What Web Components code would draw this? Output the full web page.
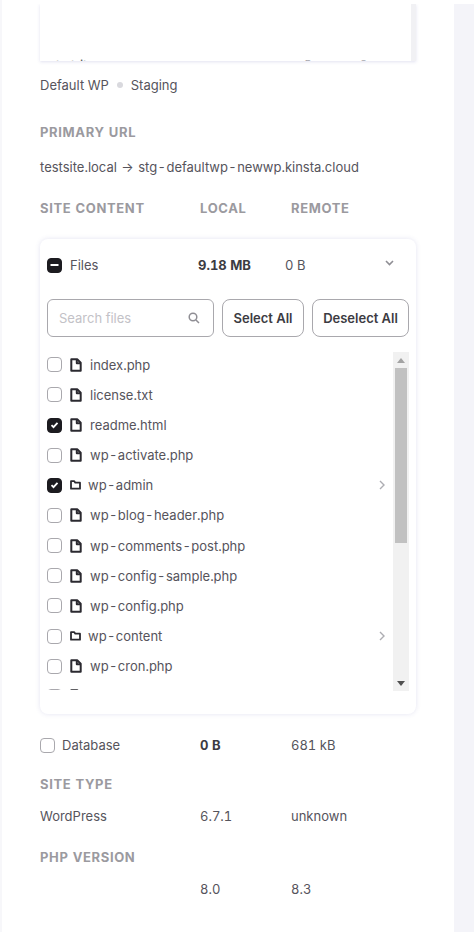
<!DOCTYPE html>
<html lang="en">
<head>
<meta charset="utf-8">
<title>Push to staging</title>
<style>
  html, body { margin: 0; padding: 0; background: #fff; }
  body { font-family: Inter, "Liberation Sans", sans-serif; font-size: 13px; font-variant-numeric: tabular-nums; color: #56545c; }
</style>
</head>
<body>
<push-panel>
  <preview-card></preview-card>
  <env-line></env-line>
  <section-label style="margin-top:28px">Primary URL</section-label>
  <url-line></url-line>
  <column-row heading style="margin-top:22px">
    <span>Site content</span><span>Local</span><span>Remote</span>
  </column-row>
  <files-card></files-card>
  <column-row checkbox style="margin-top:21px">
    <span>Database</span><b>0 B</b><span>681 kB</span>
  </column-row>
  <section-label style="margin-top:20px">Site type</section-label>
  <column-row style="margin-top:13px">
    <span>WordPress</span><span>6.7.1</span><span>unknown</span>
  </column-row>
  <section-label style="margin-top:22px">PHP version</section-label>
  <column-row style="margin-top:13px">
    <span></span><span>8.0</span><span>8.3</span>
  </column-row>
</push-panel>

<script>
const FILE_ICON = `<svg width="12" height="14" viewBox="0 0 12 14" fill="none" stroke="#2b2a30" stroke-width="2" stroke-linejoin="round"><path d="M1.3 1.2h5.9l3.5 3.5v8.1H1.3z"/><path d="M6.8 1.2v4h3.9"/></svg>`;
const FOLDER_ICON = `<svg width="11" height="10" viewBox="0 0 11 10" fill="none" stroke="#2b2a30" stroke-width="1.8" stroke-linejoin="round"><path d="M1 1.2h3.3l1 1.5H10v6H1z"/></svg>`;

// the hyphens in the reference sit a little wider than the font's own
const spaced = s => s.replace(/-/g, '<span style="margin:0 .4px">-</span>');

class PushPanel extends HTMLElement {
  constructor() {
    super();
    this.attachShadow({mode: 'open'});
    this.shadowRoot.innerHTML = `
      <style>
        :host { display: flex; width: 474px; height: 932px; overflow: hidden; box-sizing: border-box; }
        .edge { width: 2px; background: #f7f7fa; flex: none; }
        .main { width: 452px; flex: none; padding: 0 38px; box-sizing: border-box; background: #fff; }
        .side { flex: 1; margin-top: 4px; background: #f4f4f9; }
      </style>
      <div class="edge"></div>
      <div class="main"><slot></slot></div>
      <div class="side"></div>
    `;
  }
}

class PreviewCard extends HTMLElement {
  constructor() {
    super();
    this.attachShadow({mode: 'open'});
    this.shadowRoot.innerHTML = `
      <style>
        :host { display: block; height: 57px; margin-top: 4px; width: 376px; background: #fff;
          box-shadow: 0 1px 3px rgba(90, 90, 170, .18); clip-path: inset(0 -4px -4px -4px); position: relative; }
        .peek { position: absolute; left: 0; right: 0; bottom: 0; height: 2px; overflow: hidden;
          display: flex; font-size: 10px; line-height: 10px; color: #a5a5ab; }
        .peek b { margin-left: 16px; width: 259px; color: #555; }
        .peek span { width: 58px; }
        .bar { position: absolute; right: 0; top: 0; bottom: 0; width: 5px; background: #f1f1f4; }
      </style>
      <div class="peek"><b>testsite</b><span>Dev</span><span>Sync</span></div>
      <div class="bar"></div>
    `;
  }
}

class EnvLine extends HTMLElement {
  constructor() {
    super();
    this.attachShadow({mode: 'open'});
    this.shadowRoot.innerHTML = `
      <style>
        :host { display: flex; align-items: center; gap: 8px; margin-top: 14px; line-height: 20px; }
        i { width: 6px; height: 6px; border-radius: 50%; background: #d9d9de; }
      </style>
      <span>Default WP</span><i></i><span>Staging</span>
    `;
  }
}

class SectionLabel extends HTMLElement {
  constructor() {
    super();
    this.attachShadow({mode: 'open'});
    this.shadowRoot.innerHTML = `
      <style>
        :host { display: block; font-size: 13px; font-weight: 700; line-height: 18px; letter-spacing: .65px;
          text-transform: uppercase; color: #9b9a9f; }
      </style>
      <slot></slot>
    `;
  }
}

class UrlLine extends HTMLElement {
  constructor() {
    super();
    this.attachShadow({mode: 'open'});
    this.shadowRoot.innerHTML = `
      <style>
        :host { display: block; margin-top: 16px; line-height: 20px; white-space: nowrap; }
        .arrow { margin: 0 1px; }
      </style>
      testsite.local <span class="arrow">→</span> ${spaced('stg-defaultwp-newwp.kinsta.cloud')}
    `;
  }
}

class CheckMark extends HTMLElement {
  constructor() {
    super();
    this.attachShadow({mode: 'open'});
    const state = this.getAttribute('state');
    const inner = state === 'checked'
      ? `<svg width="9" height="8" viewBox="0 0 9 8" fill="none" stroke="#fff" stroke-width="1.8"><path d="M1.5 4.2l2 2 4-4.4"/></svg>`
      : state === 'mixed'
        ? `<svg width="9" height="8" viewBox="0 0 9 8" fill="none" stroke="#fff" stroke-width="2"><path d="M.5 4h8"/></svg>`
        : '';
    this.shadowRoot.innerHTML = `
      <style>
        :host { display: flex; align-items: center; justify-content: center; flex: none; box-sizing: border-box;
          width: 15px; height: 15px; border-radius: 4px; border: 1px solid #a9a8ad; background: #fff; }
        :host([state]) { background: #1c1b20; border-color: #1c1b20; }
      </style>
      ${inner}
    `;
  }
}

class ColumnRow extends HTMLElement {
  constructor() {
    super();
    this.attachShadow({mode: 'open'});
    this.shadowRoot.innerHTML = `
      <style>
        :host { display: grid; grid-template-columns: 160px 91px 1fr; align-items: center; line-height: 20px; }
        :host([heading]) { font-size: 13px; font-weight: 700; letter-spacing: .65px; text-transform: uppercase; color: #9b9a9f; line-height: 18px; }
        ::slotted(b) { font-weight: 700; color: #3c3b42; }
      </style>
      <slot></slot>
    `;
    if (this.hasAttribute('checkbox')) {
      const first = this.firstElementChild;
      first.style.cssText = 'display:flex;align-items:center;gap:7px';
      first.insertAdjacentHTML('afterbegin', '<check-mark></check-mark>');
    }
  }
}

class FileRow extends HTMLElement {
  constructor() {
    super();
    this.attachShadow({mode: 'open'});
    const folder = this.hasAttribute('folder');
    const checked = this.hasAttribute('checked');
    this.shadowRoot.innerHTML = `
      <style>
        :host { display: flex; align-items: center; height: 30.15px; flex: none; white-space: nowrap; }
        check-mark { margin-right: 8px; }
        svg { flex: none; }
        .icon { display: flex; width: 12px; }
        .name { margin-left: ${folder ? 6 : 8}px; flex: 1; }
        .more { margin-right: 8px; display: flex; }
      </style>
      <check-mark ${checked ? 'state="checked"' : ''}></check-mark>
      <span class="icon">${folder ? FOLDER_ICON : FILE_ICON}</span>
      <span class="name"><slot></slot></span>
      ${folder ? `<span class="more"><svg width="6" height="10" viewBox="0 0 6 10" fill="none" stroke="#adadb2" stroke-width="1.4"><path d="M1 1l4 4-4 4"/></svg></span>` : ''}
    `;
  }
}

class ScrollTrack extends HTMLElement {
  constructor() {
    super();
    this.attachShadow({mode: 'open'});
    this.shadowRoot.innerHTML = `
      <style>
        :host { display: flex; flex-direction: column; align-items: center; flex: none; width: 16px; background: #f1f1f1; }
        .cap { height: 16px; width: 100%; display: flex; align-items: center; justify-content: center; flex: none; }
        .thumb { width: 12px; height: 175px; background: #c1c1c1; flex: none; }
        .rest { flex: 1; }
      </style>
      <div class="cap"><svg width="8" height="5" viewBox="0 0 8 5"><path d="M4 0l4 5H0z" fill="#a3a3a3"/></svg></div>
      <div class="thumb"></div>
      <div class="rest"></div>
      <div class="cap"><svg width="8" height="5" viewBox="0 0 8 5"><path d="M0 0h8L4 5z" fill="#505050"/></svg></div>
    `;
  }
}

class FilesCard extends HTMLElement {
  constructor() {
    super();
    this.attachShadow({mode: 'open'});
    const files = [
      ['index.php'], ['license.txt'], ['readme.html', 'checked'], ['wp-activate.php'],
      ['wp-admin', 'folder checked'], ['wp-blog-header.php'], ['wp-comments-post.php'],
      ['wp-config-sample.php'], ['wp-config.php'], ['wp-content', 'folder'], ['wp-cron.php'], ['wp-links-opml.php']
    ];
    this.shadowRoot.innerHTML = `
      <style>
        :host { display: block; margin-top: 22px; width: 376px; height: 475px; box-sizing: border-box; padding: 16px 7px 0;
          border-radius: 8px; background: #fff; box-shadow: 0 0 5px rgba(90, 90, 170, .16); }
        .head { display: grid; grid-template-columns: 151px 87px 1fr auto; align-items: center; height: 20px; line-height: 20px; }
        .name { display: flex; align-items: center; gap: 8px; }
        b { font-weight: 700; color: #3c3b42; }
        .chev { margin-right: 15px; margin-top: -4px; display: flex; }
        .tools { display: flex; gap: 8px; margin-top: 24px; height: 38px; }
        .search { flex: none; width: 167px; box-sizing: border-box; border: 1px solid #a9a8ad; border-radius: 6px;
          display: flex; align-items: center; justify-content: space-between; padding: 0 13px 0 11px; color: #c3c2c7; }
        button { font: 600 13px Inter, "Liberation Sans", sans-serif; color: #3c3b42; background: #fff; box-sizing: border-box;
          border: 1px solid #a9a8ad; border-radius: 8px; padding: 0; }
        .sel { width: 82px; }
        .desel { width: 97px; }
        .list { display: flex; margin-top: 15px; height: 339px; }
        .rows { flex: 1; min-width: 0; height: 338px; overflow: hidden; display: flex; flex-direction: column; }
        .rows > :first-child { margin-top: -2.3px; }
      </style>
      <div class="head">
        <span class="name"><check-mark state="mixed"></check-mark>Files</span>
        <b>9.18 MB</b>
        <span>0 B</span>
        <span class="chev"><svg width="9" height="6" viewBox="0 0 9 6" fill="none" stroke="#8f8e94" stroke-width="1.6"><path d="M1 1l3.5 3.5L8 1"/></svg></span>
      </div>
      <div class="tools">
        <div class="search"><span>Search files</span>
          <svg width="12" height="12" viewBox="0 0 12 12" fill="none" stroke="#8f8e94" stroke-width="1.5"><circle cx="5" cy="5" r="3.8"/><path d="M8 8l3 3"/></svg>
        </div>
        <button class="sel">Select All</button>
        <button class="desel">Deselect All</button>
      </div>
      <div class="list">
        <div class="rows">
          ${files.map(([name, flags]) => `<file-row ${flags || ''}>${spaced(name)}</file-row>`).join('')}
        </div>
        <scroll-track></scroll-track>
      </div>
    `;
  }
}

customElements.define('check-mark', CheckMark);
customElements.define('file-row', FileRow);
customElements.define('scroll-track', ScrollTrack);
customElements.define('push-panel', PushPanel);
customElements.define('preview-card', PreviewCard);
customElements.define('env-line', EnvLine);
customElements.define('section-label', SectionLabel);
customElements.define('url-line', UrlLine);
customElements.define('column-row', ColumnRow);
customElements.define('files-card', FilesCard);
</script>
</body>
</html>
